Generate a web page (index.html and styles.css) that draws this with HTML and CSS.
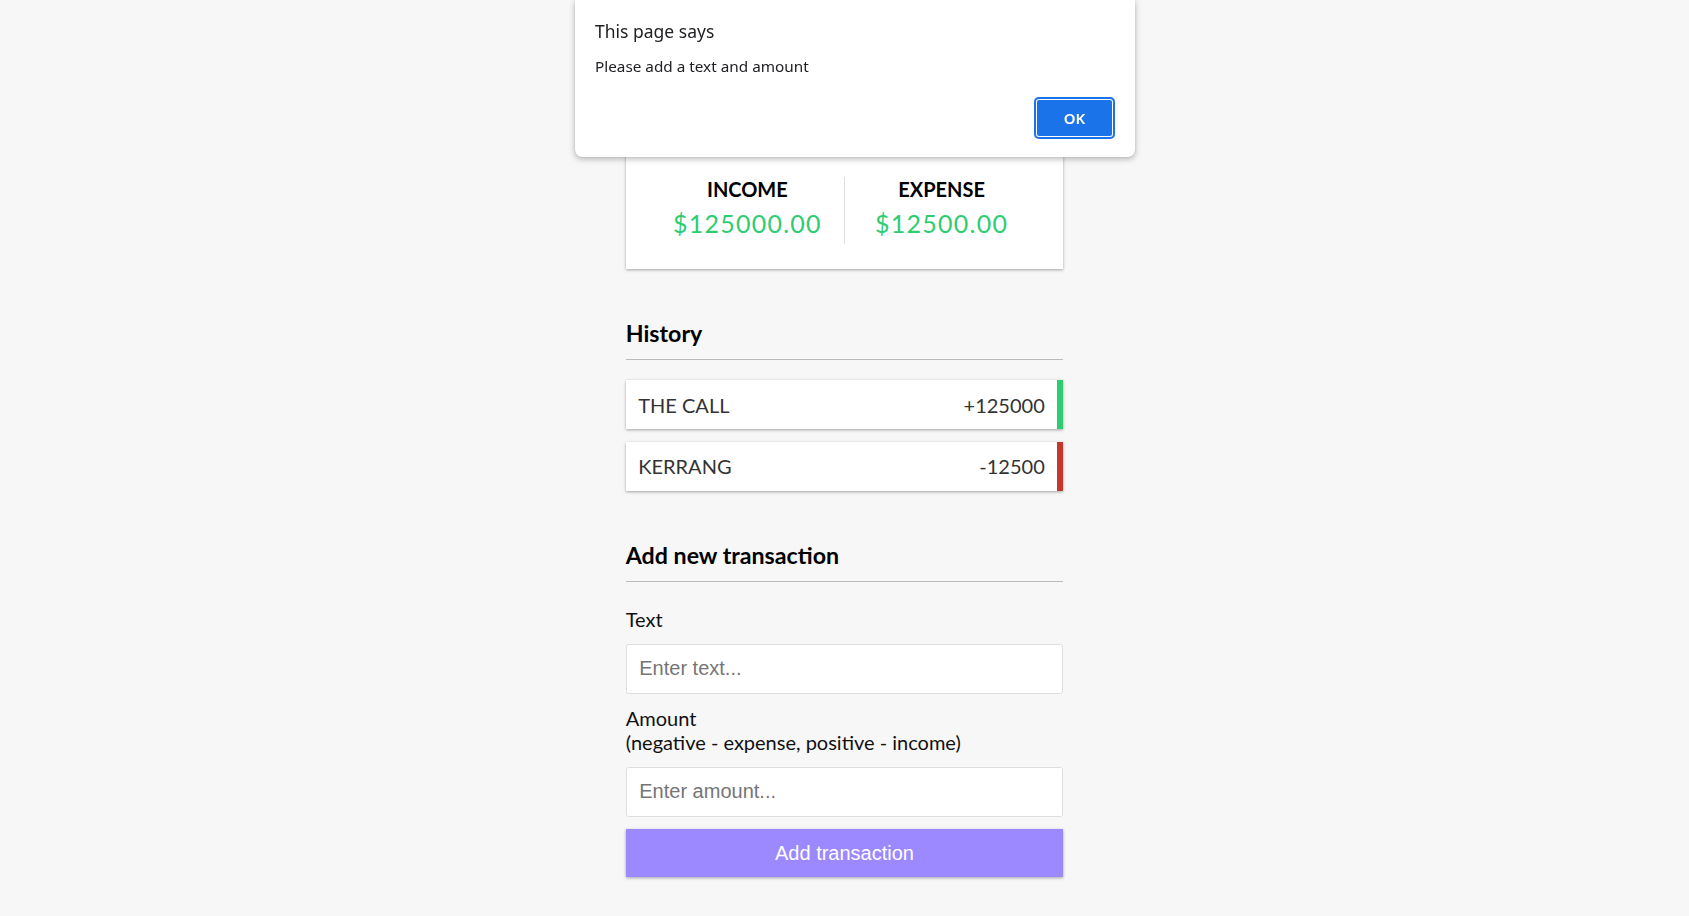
FILE: index.html
```html
<!DOCTYPE html>
<html lang="en">
<head>
<meta charset="UTF-8">
<title>Expense Tracker</title>
<link rel="stylesheet" href="styles.css">
</head>
<body>
  <div class="container">
    <div class="inc-exp-container">
      <div class="inc-col">
        <h4>Income</h4>
        <p class="money plus">$125000.00</p>
      </div>
      <div class="inc-col">
        <h4>Expense</h4>
        <p class="money plus">$12500.00</p>
      </div>
    </div>

    <h3>History</h3>
    <ul class="list">
      <li class="plus"><span>THE CALL</span><span>+125000</span></li>
      <li class="minus"><span>KERRANG</span><span>-12500</span></li>
    </ul>

    <h3>Add new transaction</h3>
    <form class="form">
      <div class="form-control">
        <label for="text">Text</label>
        <input type="text" id="text" placeholder="Enter text...">
      </div>
      <div class="form-control">
        <label for="amount">Amount <br>(negative - expense, positive - income)</label>
        <input type="text" id="amount" placeholder="Enter amount...">
      </div>
      <button type="button" class="btn">Add transaction</button>
    </form>
  </div>

  <div class="dialog">
    <div class="dialog-title">This page says</div>
    <div class="dialog-msg">Please add a text and amount</div>
    <div class="dialog-actions">
      <button type="button" class="dialog-ok">OK</button>
    </div>
  </div>
</body>
</html>
```

FILE: styles.css
```css
* {
  box-sizing: border-box;
}

html {
  overflow: hidden;
}

body {
  margin: 0;
  background-color: #f7f7f7;
  font-family: "Lato", "Open Sans", sans-serif;
  font-size: 20px;
}

.container {
  width: 437.5px;
  margin: 152px auto 0;
}

h3 {
  font-size: 23.2px;
  font-weight: 700;
  border-bottom: 1.25px solid #bbb;
  padding-bottom: 12.5px;
  margin: 50px 0 12.5px;
}

h4 {
  margin: 0;
  font-size: 20px;
  font-weight: 700;
  text-transform: uppercase;
}

.inc-exp-container {
  background-color: #fff;
  box-shadow: 0 1.25px 3.75px rgba(0, 0, 0, 0.12), 0 1.25px 2.5px rgba(0, 0, 0, 0.24);
  padding: 25px;
  display: flex;
  justify-content: space-between;
  margin: 0 0 25px;
}

.inc-col {
  flex: 1;
  text-align: center;
}

.inc-col:first-of-type {
  border-right: 1.25px solid #dedede;
}

.money {
  font-size: 25px;
  letter-spacing: 1.25px;
  margin: 6.25px 0;
  position: relative;
  top: 1px;
}

.money.plus {
  color: #2ecc71;
}

.list {
  list-style-type: none;
  padding: 0;
  margin: 20px 0 50px;
}

.list li {
  background-color: #fff;
  box-shadow: 0 1.25px 3.75px rgba(0, 0, 0, 0.12), 0 1.25px 2.5px rgba(0, 0, 0, 0.24);
  color: #333;
  display: flex;
  justify-content: space-between;
  padding: 12.5px;
  margin: 12.5px 0;
}

.list li.plus {
  border-right: 6.25px solid #2ecc71;
}

.list li.minus {
  border-right: 6.25px solid #c0392b;
}

.form {
  margin: 0;
}

label {
  display: inline-block;
  margin: 12.5px 0;
  color: #111;
}

input[type="text"] {
  border: 1.25px solid #dedede;
  border-radius: 2.5px;
  display: block;
  font-family: "Liberation Sans", Arial, sans-serif;
  font-size: 20px;
  padding: 12.5px;
  width: 100%;
  background: #fff;
  color: #333;
}

input::placeholder {
  color: #757575;
}

.btn {
  background-color: #9c88ff;
  box-shadow: 0 1.25px 3.75px rgba(0, 0, 0, 0.12), 0 1.25px 2.5px rgba(0, 0, 0, 0.24);
  color: #fff;
  border: 0;
  display: block;
  font-family: "Liberation Sans", Arial, sans-serif;
  font-size: 20px;
  margin: 12.5px 0 37.5px;
  padding: 12.5px;
  width: 100%;
}

/* native alert dialog overlay */
.dialog {
  position: fixed;
  top: 0;
  left: 575px;
  width: 560px;
  height: 157px;
  background: #fff;
  border-radius: 0 0 7px 7px;
  box-shadow: 0 2px 6px rgba(0, 0, 0, 0.28), 0 0 1px rgba(0, 0, 0, 0.3);
  padding: 19px 20px 18px 20px;
  display: flex;
  flex-direction: column;
  font-family: "Noto Sans", "Open Sans", sans-serif;
  color: #202124;
}

.dialog-title {
  font-size: 17.5px;
  line-height: 24px;
}

.dialog-msg {
  font-size: 15.3px;
  line-height: 20px;
  margin-top: 13px;
}

.dialog-actions {
  margin-top: auto;
  display: flex;
  justify-content: flex-end;
}

.dialog-ok {
  width: 81px;
  height: 42px;
  background: #1a73e8;
  color: #fff;
  border: 0;
  border-radius: 5px;
  box-shadow: inset 0 0 0 2px #1a73e8, inset 0 0 0 3px #fff;
  font-family: "Noto Sans", "Open Sans", sans-serif;
  font-size: 15px;
  font-weight: 600;
}
```
